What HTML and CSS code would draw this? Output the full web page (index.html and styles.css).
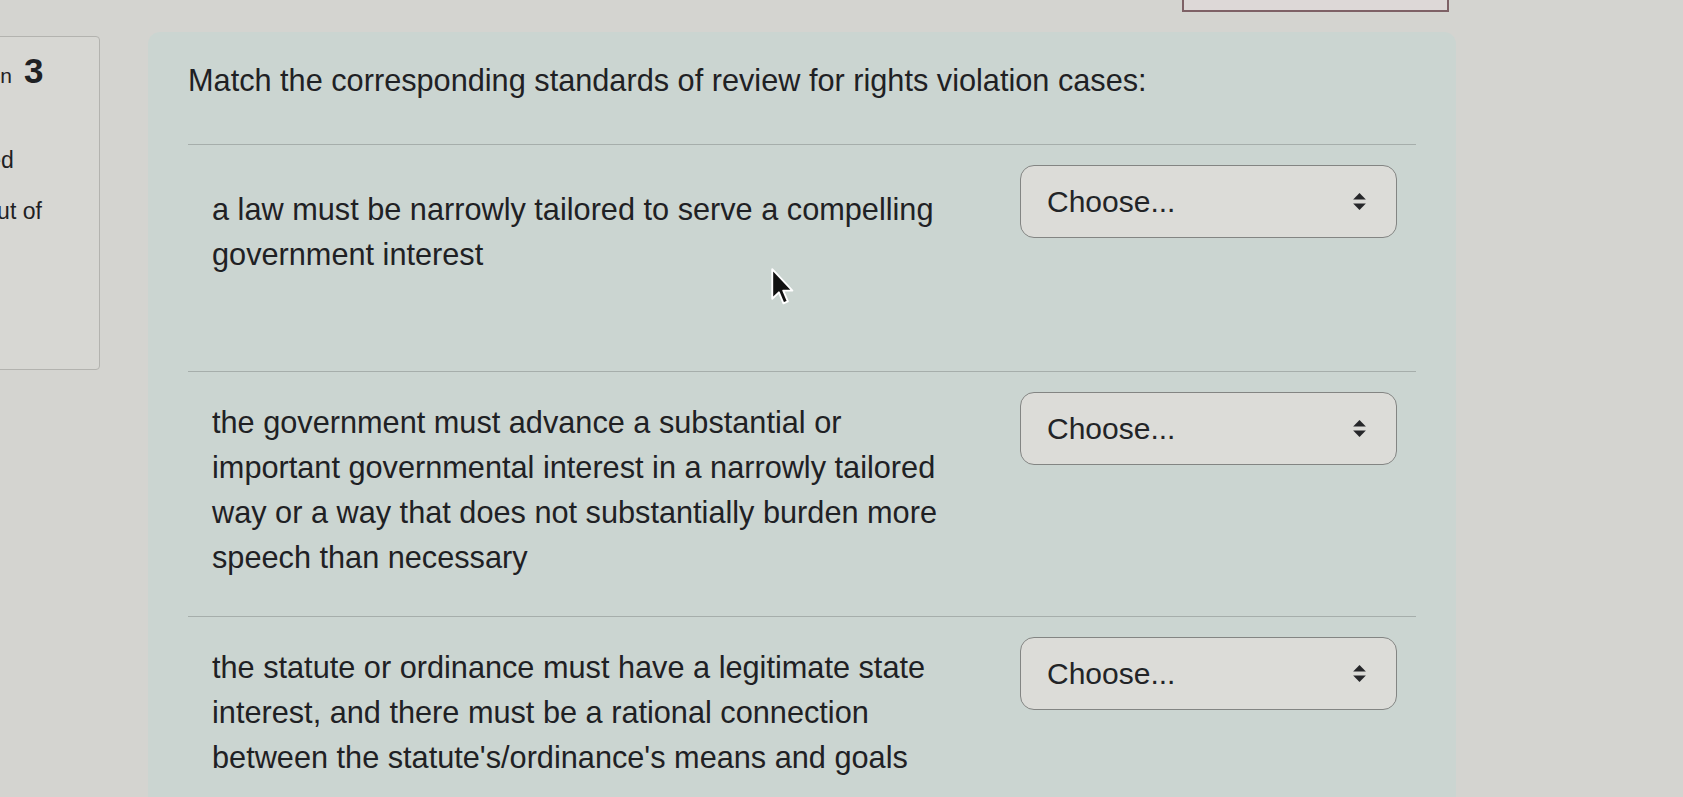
FILE: index.html
```html
<!DOCTYPE html>
<html lang="en">
<head>
<meta charset="utf-8">
<title>Question 3</title>
<link rel="stylesheet" href="styles.css">
</head>
<body>
  <header class="topbar">
    <div class="nav-box"></div>
  </header>
  <main class="layout">
    <aside class="info">
      <h3 class="qhead">Question <span class="qno">3</span></h3>
      <div class="state">Not yet answered</div>
      <div class="grade">Points out of 1.00</div>
    </aside>
    <section class="card">
      <div class="qtext">Match the corresponding standards of review for rights violation cases:</div>
      <div class="answers">
        <div class="row row-first">
          <div class="text">a law must be narrowly tailored to serve a compelling government interest</div>
          <div class="select"><span class="select-label">Choose...</span><svg class="arrows" viewBox="0 0 12 16" width="13" height="17"><polygon points="6,0 12,6.2 0,6.2"/><polygon points="0,9.8 12,9.8 6,16"/></svg></div>
        </div>
        <div class="row">
          <div class="text">the government must advance a substantial or important governmental interest in a narrowly tailored way or a way that does not substantially burden more speech than necessary</div>
          <div class="select"><span class="select-label">Choose...</span><svg class="arrows" viewBox="0 0 12 16" width="13" height="17"><polygon points="6,0 12,6.2 0,6.2"/><polygon points="0,9.8 12,9.8 6,16"/></svg></div>
        </div>
        <div class="row">
          <div class="text">the statute or ordinance must have a legitimate state interest, and there must be a rational connection between the statute's/ordinance's means and goals</div>
          <div class="select"><span class="select-label">Choose...</span><svg class="arrows" viewBox="0 0 12 16" width="13" height="17"><polygon points="6,0 12,6.2 0,6.2"/><polygon points="0,9.8 12,9.8 6,16"/></svg></div>
        </div>
      </div>
    </section>
  </main>
  <svg class="cursor" viewBox="0 0 12 20" width="23" height="38"><path d="M0.6 0.6 L0.6 16.2 L4.1 12.8 L6.5 18.6 L8.8 17.6 L6.4 11.9 L11.2 11.9 Z" fill="#111" stroke="#fff" stroke-width="1" stroke-linejoin="round"/></svg>
</body>
</html>
```
FILE: styles.css
```css
* { box-sizing: border-box; }
html, body { margin: 0; padding: 0; }
body {
  width: 1683px;
  height: 797px;
  overflow: hidden;
  background: #d4d4d0;
  font-family: "Liberation Sans", Arial, Helvetica, sans-serif;
  color: #1f2124;
  position: relative;
}
.topbar { height: 12px; }
.nav-box {
  margin-left: 1182px;
  width: 267px;
  height: 12px;
  border: 2px solid #7e6166;
  border-top: none;
  background: #ddd8d7;
}
.layout {
  display: flex;
  align-items: flex-start;
}
.info {
  margin-left: -100px;
  margin-top: 24px;
  width: 200px;
  height: 334px;
  background: #d7d7d3;
  border: 1px solid #b3b3af;
  border-radius: 4px;
  padding: 14px 31px 0 27px;
  font-size: 21px;
  color: #1f2123;
}
.qhead {
  margin: 0;
  font-size: 21px;
  font-weight: normal;
  line-height: 40px;
}
.qno {
  font-size: 35px;
  font-weight: bold;
  margin-left: 6px;
  line-height: 40px;
}
.state {
  margin: 19px 0 0 -14px;
  font-size: 23px;
  line-height: 30px;
}
.grade {
  margin: 21px 0 0 -14px;
  font-size: 23px;
  line-height: 30px;
}
.card {
  margin-left: 48px;
  margin-top: 20px;
  width: 1308px;
  min-height: 900px;
  background: #cbd5d1;
  border-radius: 12px;
  padding: 26px 40px 0;
}
.qtext {
  font-size: 30.7px;
  line-height: 45px;
  margin-bottom: 41px;
}
.row {
  display: flex;
  align-items: flex-start;
  border-top: 1px solid #a6aeab;
  padding: 20px 0 36px;
}
.row-first { min-height: 227px; }
.text {
  width: 774px;
  padding: 8px 0 0 24px;
  font-size: 30.7px;
  line-height: 45px;
}
.row-first .text { padding-top: 22px; }
.select {
  margin-left: 58px;
  width: 377px;
  height: 73px;
  display: flex;
  align-items: center;
  justify-content: space-between;
  padding: 0 30px 0 26px;
  background: #dcdcd8;
  border: 1.5px solid #838583;
  border-radius: 14px;
  font-size: 30px;
  color: #222427;
}
.arrows { fill: #26272a; flex: none; }
.cursor {
  position: absolute;
  left: 771px;
  top: 268px;
}
```
